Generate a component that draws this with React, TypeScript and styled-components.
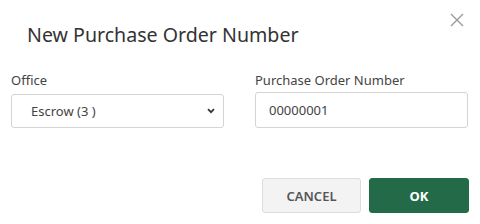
import styled, { createGlobalStyle } from "styled-components";

const GlobalStyle = createGlobalStyle`
  html, body {
    margin: 0;
    padding: 0;
    background: #ffffff;
  }
  body {
    font-family: "Noto Sans", "Open Sans", sans-serif;
    color: #333333;
  }
`;

function App() {
  return (
    <>
      <GlobalStyle />
      <Dialog>
        <Header>
          <Title>New Purchase Order Number</Title>
          <CloseButton aria-label="close">
            <svg width="14" height="14" viewBox="0 0 14 14">
              <path d="M1 1 L13 13 M13 1 L1 13" stroke="#9a9a9a" strokeWidth="1.4" />
            </svg>
          </CloseButton>
        </Header>
        <Fields>
          <Field>
            <Label>Office</Label>
            <SelectBox>
              <SelectText>Escrow (3 )</SelectText>
              <svg width="8" height="6" viewBox="0 0 8 6">
                <path d="M1 1.2 L4 4.2 L7 1.2" stroke="#333" strokeWidth="1.7" fill="none" />
              </svg>
            </SelectBox>
          </Field>
          <Field>
            <Label>Purchase Order Number</Label>
            <Input defaultValue="00000001" />
          </Field>
        </Fields>
        <Footer>
          <Button>CANCEL</Button>
          <Button primary>OK</Button>
        </Footer>
      </Dialog>
    </>
  );
}

export default App;

const Dialog = styled.div`
  width: 480px;
  height: 224px;
  box-sizing: border-box;
  display: flex;
  flex-direction: column;
`;

const Header = styled.div`
  display: flex;
  justify-content: space-between;
  align-items: flex-start;
  padding: 13px 16px 0 27px;
  height: 61px;
  box-sizing: border-box;
`;

const Title = styled.div`
  margin-top: 8px;
  font-size: 19.6px;
  color: #333333;
  line-height: 28px;
`;

const CloseButton = styled.div`
  width: 14px;
  height: 14px;
  display: flex;
`;

const Fields = styled.div`
  display: grid;
  grid-template-columns: 213px 213px;
  column-gap: 31px;
  padding: 0 0 0 11px;
`;

const Field = styled.div`
  display: flex;
  flex-direction: column;
`;

const Label = styled.div`
  font-size: 13px;
  color: #444444;
  line-height: 18px;
  margin-bottom: 5px;
  margin-top: 10px;
`;

const SelectBox = styled.div`
  height: 34px;
  box-sizing: border-box;
  border: 1px solid #d4d4d4;
  border-radius: 3px;
  display: flex;
  align-items: center;
  justify-content: space-between;
  padding: 0 8px 0 19px;
`;

const SelectText = styled.span`
  font-size: 13px;
  color: #444444;
`;

const Input = styled.input`
  height: 36px;
  box-sizing: border-box;
  border: 1px solid #d4d4d4;
  border-radius: 3px;
  padding: 0 13px;
  font-family: inherit;
  font-size: 13px;
  color: #444444;
  margin-top: -2px;
  outline: none;
`;

const Footer = styled.div`
  display: flex;
  justify-content: flex-end;
  gap: 8px;
  padding: 50px 11px 0 0;
`;

const Button = styled.button<{ primary?: boolean }>`
  width: ${({ primary }) => (primary ? "100px" : "99px")};
  height: 35px;
  border-radius: 3px;
  font-family: inherit;
  font-size: 13px;
  font-weight: ${({ primary }) => (primary ? 700 : 600)};
  color: ${({ primary }) => (primary ? "#ffffff" : "#555555")};
  background: ${({ primary }) => (primary ? "#236b48" : "#f3f3f3")};
  border: 1px solid ${({ primary }) => (primary ? "#236b48" : "#dcdcdc")};
`;
